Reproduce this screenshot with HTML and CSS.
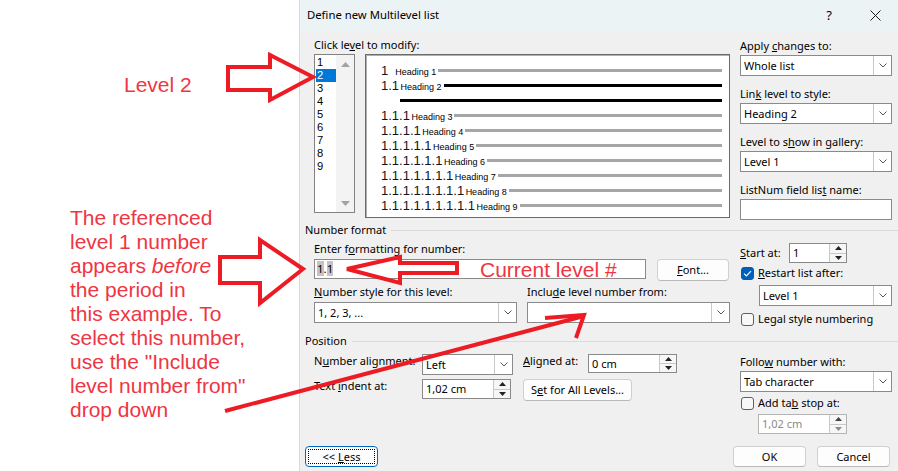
FILE: index.html
```html
<!DOCTYPE html>
<html lang="en">
<head>
<meta charset="utf-8">
<title>Define new Multilevel list</title>
<link rel="stylesheet" href="styles.css">
</head>
<body>
<div class="notes">
  <div class="note-level">Level 2</div>
  <div class="note-body">The referenced<br>level 1 number<br>appears <i>before</i><br>the period in<br>this example. To<br>select this number,<br>use the "Include<br>level number from"<br>drop down</div>
</div>

<div class="dialog">
  <div class="titlebar">
    <div class="title">Define new Multilevel list</div>
    <div class="cap-btn help">?</div>
    <div class="cap-btn"><svg width="11" height="11" viewBox="0 0 11 11"><path d="M0.5 0.5 L10.5 10.5 M10.5 0.5 L0.5 10.5" stroke="#1a1a1a" stroke-width="1"/></svg></div>
  </div>

  <div class="sec sec-a">
    <div class="levels-area">
      <div class="lbl gap2">Click le<u>v</u>el to modify:</div>
      <div class="lvrow">
        <div class="listbox">
          <div class="items">
            <div class="item">1</div>
            <div class="item sel">2</div>
            <div class="item">3</div>
            <div class="item">4</div>
            <div class="item">5</div>
            <div class="item">6</div>
            <div class="item">7</div>
            <div class="item">8</div>
            <div class="item">9</div>
          </div>
          <div class="sb">
            <svg width="9" height="5" viewBox="0 0 9 5"><path d="M0 5 L4.5 0 L9 5Z" fill="#a3a3a3"/></svg>
            <svg width="9" height="5" viewBox="0 0 9 5"><path d="M0 0 L4.5 5 L9 0Z" fill="#a3a3a3"/></svg>
          </div>
        </div>
        <div class="preview">
          <div class="prow"><span class="pn">1</span><span class="ph first">Heading 1</span><span class="pl"></span></div>
          <div class="prow"><span class="pn">1.1</span><span class="ph">Heading 2</span><span class="pl blk"></span></div>
          <div class="prow"><span class="pl blk textline"></span></div>
          <div class="prow"><span class="pn">1.1.1</span><span class="ph">Heading 3</span><span class="pl"></span></div>
          <div class="prow"><span class="pn">1.1.1.1</span><span class="ph">Heading 4</span><span class="pl"></span></div>
          <div class="prow"><span class="pn">1.1.1.1.1</span><span class="ph">Heading 5</span><span class="pl"></span></div>
          <div class="prow"><span class="pn">1.1.1.1.1.1</span><span class="ph">Heading 6</span><span class="pl"></span></div>
          <div class="prow"><span class="pn">1.1.1.1.1.1.1</span><span class="ph">Heading 7</span><span class="pl"></span></div>
          <div class="prow"><span class="pn">1.1.1.1.1.1.1.1</span><span class="ph">Heading 8</span><span class="pl"></span></div>
          <div class="prow"><span class="pn">1.1.1.1.1.1.1.1.1</span><span class="ph">Heading 9</span><span class="pl"></span></div>
        </div>
      </div>
    </div>

    <div class="rcol">
      <div class="fgrp">
        <div class="lbl r">Apply <u>c</u>hanges to:</div>
        <div class="select"><span class="val">Whole list</span><span class="dd"><svg width="8" height="5" viewBox="0 0 8 5"><path d="M0.5 0.5 L4 4 L7.5 0.5" fill="none" stroke="#555" stroke-width="1"/></svg></span></div>
      </div>
      <div class="fgrp">
        <div class="lbl r">Lin<u>k</u> level to style:</div>
        <div class="select"><span class="val">Heading 2</span><span class="dd"><svg width="8" height="5" viewBox="0 0 8 5"><path d="M0.5 0.5 L4 4 L7.5 0.5" fill="none" stroke="#555" stroke-width="1"/></svg></span></div>
      </div>
      <div class="fgrp">
        <div class="lbl r">Level to s<u>h</u>ow in gallery:</div>
        <div class="select"><span class="val">Level 1</span><span class="dd"><svg width="8" height="5" viewBox="0 0 8 5"><path d="M0.5 0.5 L4 4 L7.5 0.5" fill="none" stroke="#555" stroke-width="1"/></svg></span></div>
      </div>
      <div class="fgrp">
        <div class="lbl r">ListNum field lis<u>t</u> name:</div>
        <div class="tbox"></div>
      </div>
    </div>
  </div>

  <div class="sec sec-b">
    <div class="ghead"><span>Number format</span></div>
    <div class="sbody">
      <div class="bleft">
        <div class="lbl gap3">Enter f<u>o</u>rmatting for number:</div>
        <div class="fmtrow">
          <div class="tfield"><span class="fld">1</span>.<span class="fld">1</span></div>
          <div class="btn font-btn"><span><u>F</u>ont...</span></div>
        </div>
        <div class="pair">
          <div class="pcol">
            <div class="lbl gap3"><u>N</u>umber style for this level:</div>
            <div class="select"><span class="val">1, 2, 3, ...</span><span class="dd"><svg width="8" height="5" viewBox="0 0 8 5"><path d="M0.5 0.5 L4 4 L7.5 0.5" fill="none" stroke="#555" stroke-width="1"/></svg></span></div>
          </div>
          <div class="pcol">
            <div class="lbl gap3">Inclu<u>d</u>e level number from:</div>
            <div class="select"><span class="val"></span><span class="dd"><svg width="8" height="5" viewBox="0 0 8 5"><path d="M0.5 0.5 L4 4 L7.5 0.5" fill="none" stroke="#555" stroke-width="1"/></svg></span></div>
          </div>
        </div>
      </div>
      <div class="bright">
        <div class="startrow">
          <span class="startlbl"><u>S</u>tart at:</span>
          <div class="spin w58"><span class="val">1</span><span class="spb"><span class="up"><svg width="7" height="4" viewBox="0 0 7 4"><path d="M0 4 L3.5 0 L7 4Z" fill="#222"/></svg></span><span class="dn"><svg width="7" height="4" viewBox="0 0 7 4"><path d="M0 0 L3.5 4 L7 0Z" fill="#222"/></svg></span></span></div>
        </div>
        <div class="chkrow first">
          <span class="cb on"><svg width="9" height="7" viewBox="0 0 9 7"><path d="M1 3.6 L3.4 6 L8 1.2" fill="none" stroke="#fff" stroke-width="1.2"/></svg></span>
          <span><u>R</u>estart list after:</span>
        </div>
        <div class="select restart"><span class="val">Level 1</span><span class="dd"><svg width="8" height="5" viewBox="0 0 8 5"><path d="M0.5 0.5 L4 4 L7.5 0.5" fill="none" stroke="#555" stroke-width="1"/></svg></span></div>
        <div class="chkrow legal">
          <span class="cb"></span>
          <span>Le<u>g</u>al style numbering</span>
        </div>
      </div>
    </div>
  </div>

  <div class="sec sec-c">
    <div class="ghead"><span>Position</span></div>
    <div class="sbody">
      <div class="cleft">
        <div class="glbl">N<u>u</u>mber alignment:</div>
        <div class="select align-sel"><span class="val">Left</span><span class="dd"><svg width="8" height="5" viewBox="0 0 8 5"><path d="M0.5 0.5 L4 4 L7.5 0.5" fill="none" stroke="#555" stroke-width="1"/></svg></span></div>
        <div class="glbl c4"><u>A</u>ligned at:</div>
        <div class="spin h19"><span class="val">0 cm</span><span class="spb"><span class="up"><svg width="7" height="4" viewBox="0 0 7 4"><path d="M0 4 L3.5 0 L7 4Z" fill="#222"/></svg></span><span class="dn"><svg width="7" height="4" viewBox="0 0 7 4"><path d="M0 0 L3.5 4 L7 0Z" fill="#222"/></svg></span></span></div>
        <div class="glbl">Text <u>i</u>ndent at:</div>
        <div class="spin indent"><span class="val">1,02 cm</span><span class="spb"><span class="up"><svg width="7" height="4" viewBox="0 0 7 4"><path d="M0 4 L3.5 0 L7 4Z" fill="#222"/></svg></span><span class="dn"><svg width="7" height="4" viewBox="0 0 7 4"><path d="M0 0 L3.5 4 L7 0Z" fill="#222"/></svg></span></span></div>
        <div class="btn setall"><span>S<u>e</u>t for All Levels...</span></div>
      </div>
      <div class="cright">
        <div class="lbl gap2">Follo<u>w</u> number with:</div>
        <div class="select"><span class="val">Tab character</span><span class="dd"><svg width="8" height="5" viewBox="0 0 8 5"><path d="M0.5 0.5 L4 4 L7.5 0.5" fill="none" stroke="#555" stroke-width="1"/></svg></span></div>
        <div class="chkrow tabchk">
          <span class="cb"></span>
          <span>Add ta<u>b</u> stop at:</span>
        </div>
        <div class="spin disabled tabstop"><span class="val">1,02 cm</span><span class="spb"><span class="up"><svg width="7" height="4" viewBox="0 0 7 4"><path d="M0 4 L3.5 0 L7 4Z" fill="#444"/></svg></span><span class="dn"><svg width="7" height="4" viewBox="0 0 7 4"><path d="M0 0 L3.5 4 L7 0Z" fill="#8a8a8a"/></svg></span></span></div>
      </div>
    </div>
  </div>

  <div class="footer">
    <div class="btn less"><span class="focus"><span>&lt;&lt; <u>L</u>ess</span></span></div>
    <div class="okcancel">
      <div class="btn dlgbtn"><span>OK</span></div>
      <div class="btn dlgbtn"><span>Cancel</span></div>
    </div>
  </div>
</div>

<div class="note-cur">Current level #</div>

<svg class="overlay" width="898" height="471" viewBox="0 0 898 471">
  <g fill="none" stroke="#ed1c24" stroke-width="4" stroke-linejoin="miter">
    <polygon points="228,67 270,67 270,55 313,77 270,100 270,90 228,90"/>
    <polygon points="220,257 260,257 260,240 303,269 260,303 260,283 220,283"/>
    <polygon points="347,269 400,257 400,263 457,263 457,273 400,273 400,283"/>
    <polyline points="225,411 584,316"/>
    <polyline points="545,318 584,315 576,338"/>
  </g>
</svg>
</body>
</html>
```

FILE: styles.css
```css
* { box-sizing: border-box; }
html, body { margin: 0; padding: 0; }
body {
  width: 898px;
  height: 471px;
  overflow: hidden;
  background: #ffffff;
  display: flex;
  position: relative;
  font-family: "Noto Sans", sans-serif;
}

/* annotations */
.notes {
  width: 299px;
  flex: none;
  padding-top: 73px;
  font-family: "Liberation Sans", Arial, sans-serif;
  font-size: 21px;
  line-height: 24px;
  color: #ee3642;
  white-space: nowrap;
}
.note-level { margin-left: 124px; }
.note-body { margin: 109px 0 0 70px; }
.note-cur {
  position: absolute;
  left: 480px;
  top: 258px;
  font-family: "Liberation Sans", Arial, sans-serif;
  font-size: 21px;
  line-height: 24px;
  color: #ee3642;
  white-space: nowrap;
}
.overlay {
  position: absolute;
  left: 0;
  top: 0;
  pointer-events: none;
}

/* dialog */
.dialog {
  flex: none;
  width: 599px;
  height: 471px;
  background: #f0f0f0;
  border-left: 1px solid #d9d9d9;
  font-size: 11px;
  line-height: 14px;
  color: #000;
  white-space: nowrap;
}
.titlebar {
  height: 32px;
  background: #ecf3f5;
  display: flex;
  align-items: center;
  padding-left: 7px;
  padding-bottom: 2px;
}
.title { flex: 1; font-size: 11.3px; }
.cap-btn {
  width: 46px;
  height: 30px;
  display: flex;
  align-items: center;
  justify-content: center;
}
.cap-btn.help { font-size: 13px; }

.sec { padding-left: 14px; }
.lbl { line-height: 14px; }
.lbl.gap2 { margin-bottom: 2px; }
.lbl.gap3 { margin-bottom: 3px; }
.lbl.r { line-height: 15px; margin-bottom: 2px; }

/* section A */
.sec-a {
  height: 191px;
  padding-top: 6px;
  display: flex;
  gap: 10px;
}
.levels-area { width: 416px; }
.lvrow { display: flex; gap: 10px; align-items: flex-start; }
.listbox {
  width: 41px;
  height: 159px;
  background: #fff;
  border: 1px solid #828282;
  display: flex;
}
.items { width: 21px; padding-top: 1px; }
.item {
  height: 13px;
  line-height: 13px;
  padding-left: 2px;
  font-family: "Liberation Sans", Arial, sans-serif;
  font-size: 11.2px;
}
.item.sel {
  margin-left: 1px;
  padding-left: 1px;
  background: #0078d7;
  color: #fff;
}
.sb {
  flex: 1;
  background: #f3f3f3;
  display: flex;
  flex-direction: column;
  align-items: center;
  justify-content: space-between;
  padding: 7px 0 6px;
}
.preview {
  width: 365px;
  height: 164px;
  background: #fff;
  border: 1px solid #6b6b6b;
  box-shadow: inset 1px 1px 0 #b0b0b0;
  padding: 8px 7px 0 15px;
}
.prow {
  display: flex;
  align-items: baseline;
  height: 15px;
}
.pn {
  font-family: "Liberation Sans", Arial, sans-serif;
  font-size: 13px;
  line-height: 15px;
  color: #141420;
}
.ph {
  font-family: "Liberation Sans", Arial, sans-serif;
  font-size: 9px;
  line-height: 15px;
  margin-left: 1.5px;
}
.ph.first { margin-left: 7px; }
.pl {
  flex: 1;
  height: 3px;
  align-self: flex-start;
  margin: 6px 0 0 2px;
  background: #a6a6a6;
}
.pl.blk { background: #000; }
.pl.textline { margin-left: 19px; }

.rcol { width: 152px; }
.fgrp { margin-bottom: 10px; }

/* form controls */
.select {
  display: flex;
  height: 21px;
  background: #fff;
  border: 1px solid #8a8a8a;
}
.select .val {
  flex: 1;
  padding-left: 3px;
  line-height: 19px;
}
.dd {
  width: 18px;
  border-left: 1px solid #c8c8c8;
  display: flex;
  align-items: center;
  justify-content: center;
}
.tbox {
  height: 21px;
  background: #fff;
  border: 1px solid #8a8a8a;
}
.spin {
  display: flex;
  height: 20px;
  background: #fff;
  border: 1px solid #8a8a8a;
}
.spin .val {
  flex: 1;
  padding-left: 3px;
  line-height: 18px;
}
.spb {
  width: 17px;
  border-left: 1px solid #c8c8c8;
  background: #f6f6f6;
  display: flex;
  flex-direction: column;
}
.spb span {
  flex: 1;
  display: flex;
  align-items: center;
  justify-content: center;
}
.spb .up { border-bottom: 1px solid #c8c8c8; }
.spin.disabled { border-color: #b4b4b4; }
.spin.disabled .val { color: #8a8a8a; }

.btn {
  height: 22px;
  border: 1px solid #d0d0d0;
  border-bottom-color: #b9b9b9;
  border-radius: 4px;
  background: #fdfdfd;
  display: flex;
  align-items: center;
  justify-content: center;
}
.cb {
  width: 13px;
  height: 13px;
  border-radius: 3px;
  border: 1px solid #5f5f5f;
  background: #f8f8f8;
  display: flex;
  align-items: center;
  justify-content: center;
  flex: none;
}
.cb.on { background: #005fb8; border-color: #005fb8; }
.chkrow {
  display: flex;
  align-items: center;
  gap: 4px;
  height: 14px;
  padding-left: 1px;
}

/* group headers */
.ghead {
  display: flex;
  align-items: center;
  gap: 5px;
  height: 14px;
  margin-left: -9px;
}
.ghead::after {
  content: "";
  flex: 1;
  height: 1px;
  background: #dadada;
}
.sbody { display: flex; gap: 10px; }

/* section B */
.sec-b { height: 111px; }
.bleft { width: 416px; margin-top: 5px; }
.fmtrow { display: flex; gap: 11px; align-items: flex-start; }
.tfield {
  width: 332px;
  height: 20px;
  background: #fff;
  border: 1px solid #8a8a8a;
  padding-left: 2px;
  line-height: 18px;
  font-size: 11.5px;
}
.fld { background: #c4c4c4; }
.font-btn { width: 72px; }
.pair { display: flex; gap: 10px; margin-top: 4px; }
.pcol { width: 203px; }

.bright { width: 152px; margin-top: 6px; }
.startrow { display: flex; align-items: center; height: 20px; }
.startlbl { width: 49px; }
.w58 { width: 58px; }
.chkrow.first { margin-top: 3px; }
.select.restart { margin: 5px 0 0 19px; }
.chkrow.legal { margin-top: 6px; }

/* section C */
.sec-c { height: 112px; }
.cleft {
  width: 416px;
  margin-top: 6px;
  display: grid;
  grid-template-columns: 108px 91px 10px 65px 89px;
  grid-template-rows: 21px 22px;
  row-gap: 4px;
  align-items: start;
}
.glbl { line-height: 14px; }
.glbl.c4 { grid-column: 4; }
.spin.h19 { height: 19px; }
.spin.h19 .val { line-height: 17px; }
.spin.indent { width: 89px; }
.btn.setall { grid-column: 4 / span 2; width: 109px; }
.cright { width: 152px; margin-top: 7px; }
.chkrow.tabchk { margin-top: 4px; }
.spin.tabstop { width: 89px; margin: 4px 0 0 18px; }

/* footer */
.footer {
  display: flex;
  justify-content: space-between;
  padding: 0 8px 0 5px;
}
.okcancel { display: flex; gap: 11px; }
.btn.dlgbtn { width: 73px; height: 21px; }
.btn.less {
  width: 73px;
  height: 21px;
  border: 1px solid #0067c0;
  padding: 2px;
  align-items: stretch;
  justify-content: stretch;
}
.focus {
  flex: 1;
  border: 1px dotted #000;
  display: flex;
  align-items: center;
  justify-content: center;
}
```
